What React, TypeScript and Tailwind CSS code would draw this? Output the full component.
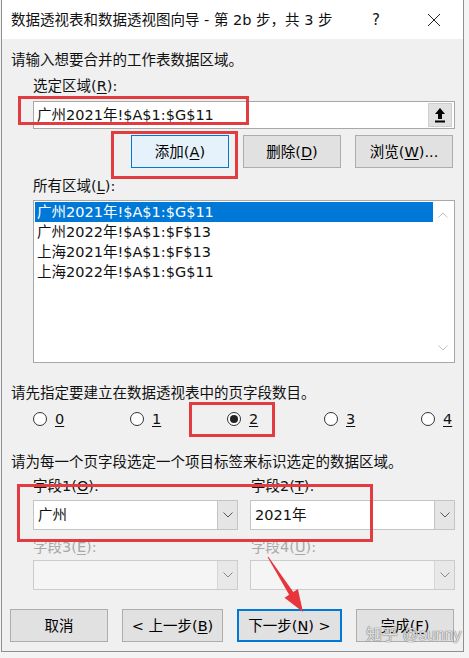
import React from "react";

// Windows-style PivotTable wizard dialog, step 2b

const U = ({ children }: { children: React.ReactNode }) => (
  <span className="underline underline-offset-[2px] decoration-1">{children}</span>
);

const Btn = ({
  children,
  w = "w-[98px]",
  variant = "normal",
}: {
  children: React.ReactNode;
  w?: string;
  variant?: "normal" | "hover" | "default";
}) => {
  const look =
    variant === "hover"
      ? "bg-[#e5f1fb] border border-[#0078d7]"
      : variant === "default"
      ? "bg-[#e1e1e1] border-2 border-[#0078d7]"
      : "bg-[#e1e1e1] border border-[#adadad]";
  return (
    <div className={`${w} shrink-0 h-[33px] ${look} flex items-center justify-center text-black`}>
      {children}
    </div>
  );
};

const Radio = ({ label, checked }: { label: string; checked?: boolean }) => (
  <div className="w-[97px] shrink-0 flex items-center h-[20px]">
    <div className="w-[14px] h-[14px] rounded-full border border-[#333] bg-white flex items-center justify-center">
      {checked && <div className="w-[8px] h-[8px] rounded-full bg-[#222]" />}
    </div>
    <span className="ml-[8px]">
      <U>{label}</U>
    </span>
  </div>
);

const Chevron = ({ color = "#555" }: { color?: string }) => (
  <svg width="10" height="6" viewBox="0 0 10 6">
    <path d="M0.5 0.5 L5 5 L9.5 0.5" fill="none" stroke={color} strokeWidth="1" />
  </svg>
);

const Combo = ({ value, disabled }: { value?: string; disabled?: boolean }) => (
  <div
    className={`w-[205px] h-[30px] flex border ${
      disabled ? "border-[#cccccc] bg-[#f5f5f5]" : "border-[#c4c4c4] bg-white"
    }`}
  >
    <div className="flex-1 flex items-center pl-[4px]">{value}</div>
    <div
      className={`w-[20px] flex items-center justify-center border-l ${
        disabled ? "border-[#d6d6d6] bg-[#e8e8e8]" : "border-[#c4c4c4] bg-[#e5e5e5]"
      }`}
    >
      <Chevron color={disabled ? "#8a8a8a" : "#555"} />
    </div>
  </div>
);

const ranges = [
  "广州2021年!$A$1:$G$11",
  "广州2022年!$A$1:$F$13",
  "上海2021年!$A$1:$F$13",
  "上海2022年!$A$1:$G$11",
];

export default function App() {
  return (
    <div className="relative w-[469px] h-[658px] bg-[#f4f4f4] overflow-hidden font-['DejaVu_Sans','Noto_Sans_CJK_SC',sans-serif] text-[14.5px] text-[#111] leading-[20px]">
      <div className="ml-[1px] w-[463px] h-[652px] border-x border-b border-[#8f8f8f] bg-[#f0f0f0] flex flex-col">
        {/* title bar */}
        <div className="h-[39px] bg-white flex items-center pl-[9px] shrink-0">
          <span className="flex-1">数据透视表和数据透视图向导 - 第 2b 步，共 3 步</span>
          <span className="w-[14px] text-center mr-[44px] text-[15px]">?</span>
          <svg width="14" height="14" viewBox="0 0 14 14" className="mr-[22px]">
            <path d="M1 1 L13 13 M13 1 L1 13" stroke="#222" strokeWidth="1" />
          </svg>
        </div>

        {/* body */}
        <div className="pl-[9px] pr-[7px] flex flex-col">
          <div className="mt-[11px]">请输入想要合并的工作表数据区域。</div>

          <div className="ml-[22px] flex flex-col">
            <div className="mt-[6px]">
              选定区域(<U>R</U>):
            </div>
            <div className="mt-[5px] h-[28px] w-[422px] bg-white border border-[#a8a8a8] flex items-center pl-[3px] pr-[2px]">
              <span className="flex-1">广州2021年!$A$1:$G$11</span>
              <div className="w-[24px] h-[24px] bg-[#e1e1e1] border border-[#cfcfcf] flex items-center justify-center">
                <svg width="12" height="16" viewBox="0 0 12 16">
                  <path d="M6 1 L11 7 H8 V12 H4 V7 H1 Z" fill="#000" />
                  <rect x="1" y="13.5" width="10" height="2" fill="#000" />
                </svg>
              </div>
            </div>

            <div className="mt-[6px] flex gap-[14px] pl-[98px]">
              <Btn variant="hover">
                添加(<U>A</U>)
              </Btn>
              <Btn>
                删除(<U>D</U>)
              </Btn>
              <Btn>
                浏览(<U>W</U>)...
              </Btn>
            </div>

            <div className="mt-[8px]">
              所有区域(<U>L</U>):
            </div>
            <div className="mt-[4px] h-[163px] w-[422px] bg-white border border-[#a8a8a8] flex p-[1px]">
              <div className="flex-1 flex flex-col">
                {ranges.map((r, i) => (
                  <div
                    key={r}
                    className={`h-[20px] pl-[2px] ${i === 0 ? "bg-[#0078d7] text-white" : ""}`}
                  >
                    {r}
                  </div>
                ))}
              </div>
              <div className="w-[20px] flex flex-col items-center justify-between py-[10px]">
                <svg width="10" height="6" viewBox="0 0 10 6">
                  <path d="M0.5 5.5 L5 1 L9.5 5.5" fill="none" stroke="#c2c2c2" strokeWidth="1" />
                </svg>
                <Chevron color="#c2c2c2" />
              </div>
            </div>
          </div>

          <div className="mt-[20px]">请先指定要建立在数据透视表中的页字段数目。</div>
          <div className="mt-[6px] ml-[22px] flex">
            <Radio label="0" />
            <Radio label="1" />
            <Radio label="2" checked />
            <Radio label="3" />
            <Radio label="4" />
          </div>

          <div className="mt-[23px]">请为每一个页字段选定一个项目标签来标识选定的数据区域。</div>
          <div className="ml-[22px] grid grid-cols-[205px_205px] gap-x-[12px]">
            <div className="mt-[4px]">
              字段1(<U>O</U>):
            </div>
            <div className="mt-[4px] pl-[1px]">
              字段2(<U>T</U>):
            </div>
            <div className="mt-[4px]">
              <Combo value="广州" />
            </div>
            <div className="mt-[4px]">
              <Combo value="2021年" />
            </div>
            <div className="mt-[7px] text-[#a8a8a8]">
              字段3(<U>E</U>):
            </div>
            <div className="mt-[7px] pl-[1px] text-[#a8a8a8]">
              字段4(<U>U</U>):
            </div>
            <div className="mt-[3px]">
              <Combo disabled />
            </div>
            <div className="mt-[3px]">
              <Combo disabled />
            </div>
          </div>

          <div className="mt-[19px] ml-[-1px] flex gap-[14px]">
            <Btn>取消</Btn>
            <Btn w="w-[101px]">
              &lt; 上一步(<U>B</U>)
            </Btn>
            <Btn w="w-[105px]" variant="default">
              下一步(<U>N</U>) &gt;
            </Btn>
            <Btn>
              完成(<U>F</U>)
            </Btn>
          </div>
        </div>
      </div>

      {/* annotations */}
      <div className="absolute left-[18px] top-[96px] w-[231px] h-[29px] border-[3px] border-[#e23b40]" />
      <div className="absolute left-[111px] top-[131px] w-[127px] h-[48px] border-[3px] border-[#e23b40]" />
      <div className="absolute left-[189px] top-[402px] w-[86px] h-[35px] border-[3px] border-[#e23b40]" />
      <div className="absolute left-[17px] top-[484px] w-[356px] h-[58px] border-[3px] border-[#e23b40]" />
      <svg className="absolute left-0 top-0" width="469" height="658" viewBox="0 0 469 658">
        <polygon
          points="268.4,556.7 293.3,592.1 297.9,589.1 303,612 284.5,597.7 289.1,594.7 267.6,557.3"
          fill="#e8353b"
        />
      </svg>
      <div className="absolute left-[366px] top-[625px] font-['Liberation_Sans','Noto_Sans_CJK_SC',sans-serif] text-[16px] leading-[20px] text-white/80 [text-shadow:0_0_1px_#666,0_0_1px_#666]">
        知乎 @sunny
      </div>
    </div>
  );
}
